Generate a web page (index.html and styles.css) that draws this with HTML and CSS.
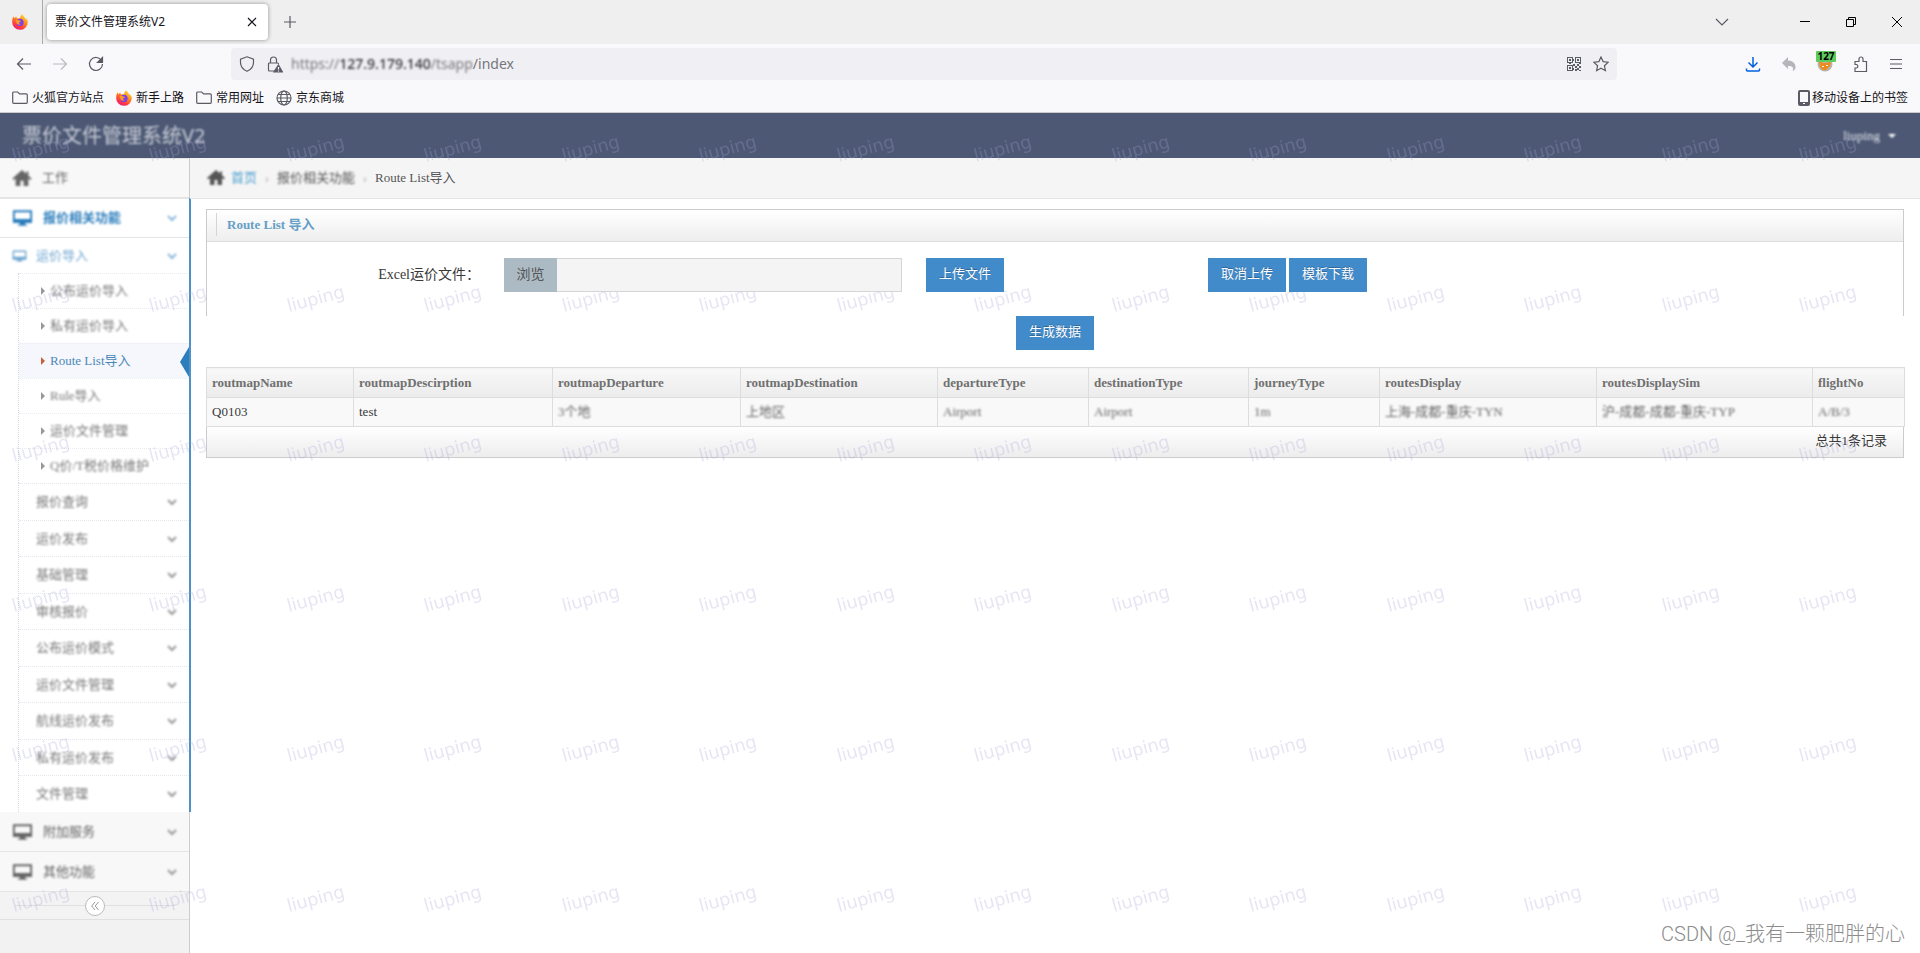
FILE: index.html
```html
<!DOCTYPE html>
<html lang="zh-CN">
<head>
<meta charset="utf-8">
<title>票价文件管理系统V2</title>
<link rel="stylesheet" href="styles.css">
</head>
<body>
<svg class="defs" aria-hidden="true">
  <defs>
    <linearGradient id="flame" x1="0.8" y1="0" x2="0.2" y2="1">
      <stop offset="0" stop-color="#ffe14a"/><stop offset="0.4" stop-color="#ff8a16"/><stop offset="0.75" stop-color="#ff3647"/><stop offset="1" stop-color="#e31587"/>
    </linearGradient>
    <symbol id="firefox" viewBox="0 0 16 16">
      <path fill="url(#flame)" d="M15.4 6.2C15 5.200 14.200 4.200 13.600 3.900c.4.8.6 1.500.7 2C13.300 3.700 11.600 2.800 10.300.3 8.800 1.200 8.200 2.900 8.100 4c-.8 0-1.600.2-2.300.6C4.700 4 4.400 3.200 4.300 2.400 3.400 2.900 2.700 3.700 2.200 4.300c-.4-.4-.4-1.700-.3-2.200C.9 3.300.2 5 .2 7.900a7.800 7.800 0 0 0 15.600.3c0-.7-.1-1.400-.4-2z"/>
      <circle cx="8" cy="8.400" r="3.600" fill="#7a3ff0"/>
      <path fill="#ff9a1f" d="M3.700 6.200c1.300-.7 2.700-.4 3.600.4 1 .2 1.600.2 1.500.6-.2.800-1.300.8-1.700 1.300-.3.700.5 1.600 1.800 1.400-1.200 1.300-3.600.8-4.400-.7-.4-1-.5-2-.8-3z"/>
    </symbol>
    <symbol id="folder" viewBox="0 0 16 16"><path d="M1.700 13.300h12.600a1 1 0 0 0 1-1V4.900a1 1 0 0 0-1-1H7.600L5.700 2H1.700a1 1 0 0 0-1 1v9.300a1 1 0 0 0 1 1z"/></symbol>
    <symbol id="chevron" viewBox="0 0 12 12"><path d="M2 4l4 4 4-4"/></symbol>
    <symbol id="monitor" viewBox="0 0 22 18"><path fill="none" stroke="currentColor" stroke-width="2" d="M2 2h18v11H2z"/><path fill="currentColor" d="M1 10h20v4H1zM8 14h6v2H8zM6 16h10v1H6z"/></symbol>
    <symbol id="home" viewBox="0 0 18 16"><path fill="currentColor" d="M9 0L0 8l1 1.400 2-1.500V15h4.500v-5h3v5H15V7.900l2 1.500L18 8l-3-2.700V1.500h-2v2z"/></symbol>
    <pattern id="marks" width="275" height="150" patternUnits="userSpaceOnUse">
      <text class="mark-text" x="14" y="49" transform="rotate(-15 14 49)">liuping</text>
      <text class="mark-text" x="151" y="49" transform="rotate(-15 151 49)">liuping</text>
    </pattern>
  </defs>
</svg>

<div class="browser">
  <div class="tabstrip">
    <div class="pinned"><svg class="i16"><use href="#firefox"/></svg></div>
    <div class="tab"><span>票价文件管理系统V2</span>
      <button class="bare" aria-label="关闭标签页"><svg class="line dark" width="10" height="10" viewBox="0 0 10 10"><path d="M1 1l8 8M9 1L1 9"/></svg></button>
    </div>
    <button class="bare newtab" aria-label="新建标签页"><svg class="line" width="12" height="12" viewBox="0 0 12 12"><path d="M6 0v12M0 6h12"/></svg></button>
    <div class="window-buttons">
      <button class="bare alltabs" aria-label="所有标签页"><svg class="line" width="14" height="14" viewBox="0 0 14 14"><path d="M1 4l6 6 6-6"/></svg></button>
      <button class="bare" aria-label="最小化"><svg class="line black" width="12" height="12" viewBox="0 0 12 12"><path d="M1 5.500h10"/></svg></button>
      <button class="bare" aria-label="还原"><svg class="line black" width="12" height="12" viewBox="0 0 12 12"><path d="M1.500 3.500h7v7h-7zM3.500 3.500v-2h7v7h-2"/></svg></button>
      <button class="bare" aria-label="关闭"><svg class="line black" width="12" height="12" viewBox="0 0 12 12"><path d="M1 1l10 10M11 1L1 11"/></svg></button>
    </div>
  </div>

  <div class="toolbar">
    <div class="nav">
      <button class="bare" aria-label="后退"><svg class="line" width="16" height="16" viewBox="0 0 16 16"><path d="M15 8H1.500M7 2.500L1.500 8 7 13.500"/></svg></button>
      <button class="bare off" aria-label="前进"><svg class="line" width="16" height="16" viewBox="0 0 16 16"><path d="M1 8h13.500M9 2.500L14.500 8 9 13.500"/></svg></button>
      <button class="bare" aria-label="刷新"><svg class="line" width="16" height="16" viewBox="0 0 16 16"><path d="M13.500 4.500A6.500 6.500 0 1 0 14.500 8"/><path fill="#5b5b66" d="M14.500 1.500v5h-5z"/></svg></button>
    </div>
    <div class="urlbar">
      <svg class="line" width="16" height="16" viewBox="0 0 16 16"><path d="M8 .8l6.500 2.300v3.400c0 4-3 7.300-6.500 8.800C4.500 13.800 1.500 10.500 1.500 6.500V3.100z"/></svg>
      <svg class="line" width="16" height="17" viewBox="0 0 16 17"><path d="M8 15H2.500a1 1 0 0 1-1-1V8a1 1 0 0 1 1-1h8a1 1 0 0 1 1 1M3.500 7V4a3 3 0 0 1 6 0v3"/><path fill="#5b5b66" d="M11.500 9l4 7H7z"/><path stroke="#fff" d="M11.500 11v2.500M11.500 14.500v1"/></svg>
      <div class="url"><span class="smudge">https://<b>127.9.179.140</b>/tsapp</span><span>/index</span></div>
      <svg width="14" height="14" viewBox="0 0 14 14" fill="#5b5b66"><path fill-rule="evenodd" d="M0 0h6v6H0zM1 1v4h4V1zM8 0h6v6H8zM9 1v4h4V1zM0 8h6v6H0zM1 9v4h4V9zM2 2h2v2H2zM10 2h2v2h-2zM2 10h2v2H2z"/><path d="M6 7h2v2H6zM8 9h2v2H8zM10 7h2v2h-2zM12 9h2v2h-2zM10 11h2v2h-2zM8 12h2v2H8zM12 13h2v1h-2zM6 2h1v2H6zM2 6h2v1H2zM6 11h1v2H6zM12 6h2v1h-2z"/></svg>
      <svg class="line" width="16" height="16" viewBox="0 0 16 16"><path d="M8 1l2.100 4.600 5.100.6-3.800 3.500 1 5L8 12.200l-4.400 2.500 1-5L.8 6.200l5.100-.6z"/></svg>
    </div>
    <div class="tools">
      <svg width="16" height="16" viewBox="0 0 16 16" fill="none" stroke="#0061e0" stroke-width="1.500"><path d="M8 1v9.500M3.500 6.500L8 11l4.500-4.500M1.500 12.500v1.500a1 1 0 0 0 1 1h11a1 1 0 0 0 1-1v-1.500"/></svg>
      <svg width="16" height="16" viewBox="0 0 16 16" fill="#b5b5ba"><path d="M7 1v3.500c5 .2 8 3 7.500 7.500-.3 1.500-1.500 2.500-3 3 1.500-3 .5-5-4.500-5V13L1 7z"/></svg>
      <div class="ext"><svg width="16" height="16" viewBox="0 0 16 16"><circle cx="8" cy="8" r="7.500" fill="#b9b2aa"/><path fill="#f08a1d" d="M2 5l4 2h4l4-2-1 5-4 4H6l-3-3z"/><path fill="#fff" d="M5 10h2v1H5zM9 9h2v1H9z"/></svg><span class="badge">127</span></div>
      <svg class="line" width="16" height="17" viewBox="0 0 16 17"><path d="M2 5.500h4V3a2 2 0 0 1 4 0v2.500h3.500v10H2V12h1.500a1.800 1.800 0 0 0 0-3.500H2z"/></svg>
      <svg class="line" width="14" height="12" viewBox="0 0 14 12"><path d="M1 1.500h12M1 6h12M1 10.500h12"/></svg>
    </div>
  </div>

  <div class="bookmarks">
    <a href="#"><svg class="i16 line"><use href="#folder"/></svg>火狐官方站点</a>
    <a href="#"><svg class="i16"><use href="#firefox"/></svg>新手上路</a>
    <a href="#"><svg class="i16 line"><use href="#folder"/></svg>常用网址</a>
    <a href="#"><svg class="i16 line" viewBox="0 0 16 16"><circle cx="8" cy="8" r="7"/><ellipse cx="8" cy="8" rx="3.300" ry="7"/><path d="M1 8h14M2 4.500h12M2 11.500h12"/></svg>京东商城</a>
    <a href="#" class="mobile"><svg width="12" height="16" viewBox="0 0 12 16"><rect x="1" y="1" width="10" height="14" rx="1" fill="none" stroke="#5b5b66" stroke-width="2"/><path fill="#5b5b66" d="M1 12h10v3H1z"/><path stroke="#fff" d="M5 13.500h2"/></svg>移动设备上的书签</a>
  </div>
</div>

<div class="app">
  <header class="topbar">
    <span class="brand smudge">票价文件管理系统V2</span>
    <button class="bare user smudge">liuping <i class="caret"></i></button>
  </header>

  <div class="body">
    <nav class="sidebar">
      <a href="#" class="top"><svg class="smudge" width="20" height="17"><use href="#home"/></svg><span class="smudge">工作</span></a>
      <div class="open">
        <a href="#" class="top current"><svg class="smudge" width="21" height="18"><use href="#monitor"/></svg><b class="smudge">报价相关功能</b><svg class="chev smudge"><use href="#chevron"/></svg></a>
        <a href="#" class="group"><svg class="smudge" width="15" height="14"><use href="#monitor"/></svg><span class="smudge">运价导入</span><svg class="chev smudge"><use href="#chevron"/></svg></a>
        <div class="leaves">
          <a href="#"><i></i><span class="smudge">公布运价导入</span></a>
          <a href="#"><i></i><span class="smudge">私有运价导入</span></a>
          <a href="#" class="active"><i></i><span>Route List导入</span></a>
          <a href="#"><i></i><span class="smudge">Rule导入</span></a>
          <a href="#"><i></i><span class="smudge">运价文件管理</span></a>
          <a href="#"><i></i><span class="smudge">Q价/T税价格维护</span></a>
        </div>
        <div class="groups">
          <a href="#"><span class="smudge">报价查询</span><svg class="chev smudge"><use href="#chevron"/></svg></a>
          <a href="#"><span class="smudge">运价发布</span><svg class="chev smudge"><use href="#chevron"/></svg></a>
          <a href="#"><span class="smudge">基础管理</span><svg class="chev smudge"><use href="#chevron"/></svg></a>
          <a href="#"><span class="smudge">审核报价</span><svg class="chev smudge"><use href="#chevron"/></svg></a>
          <a href="#"><span class="smudge">公布运价模式</span><svg class="chev smudge"><use href="#chevron"/></svg></a>
          <a href="#"><span class="smudge">运价文件管理</span><svg class="chev smudge"><use href="#chevron"/></svg></a>
          <a href="#"><span class="smudge">航线运价发布</span><svg class="chev smudge"><use href="#chevron"/></svg></a>
          <a href="#"><span class="smudge">私有运价发布</span><svg class="chev smudge"><use href="#chevron"/></svg></a>
          <a href="#"><span class="smudge">文件管理</span><svg class="chev smudge"><use href="#chevron"/></svg></a>
        </div>
      </div>
      <a href="#" class="top"><svg class="smudge" width="21" height="18"><use href="#monitor"/></svg><span class="smudge">附加服务</span><svg class="chev smudge"><use href="#chevron"/></svg></a>
      <a href="#" class="top"><svg class="smudge" width="21" height="18"><use href="#monitor"/></svg><span class="smudge">其他功能</span><svg class="chev smudge"><use href="#chevron"/></svg></a>
      <div class="collapse"><button aria-label="收起菜单"><svg width="8" height="8" viewBox="0 0 8 8"><path fill="none" stroke="#999" d="M4 0L.7 4 4 8M7.500 0L4.200 4l3.300 4"/></svg></button></div>
    </nav>

    <main>
      <div class="crumbs">
        <svg class="smudge" width="18" height="16"><use href="#home"/></svg>
        <a href="#" class="smudge">首页</a>
        <span class="sep smudge">›</span>
        <span class="smudge">报价相关功能</span>
        <span class="sep smudge">›</span>
        <span>Route List导入</span>
      </div>

      <section class="content">
        <div class="panel">
          <div class="panel-head"><h1>Route List 导入</h1></div>
          <form class="upload">
            <label for="file">Excel运价文件：</label>
            <div class="filebox"><button type="button">浏览</button><input id="file" type="text" readonly></div>
            <div class="send"><button type="button" class="btn">上传文件</button></div>
            <div class="extra"><button type="button" class="btn">取消上传</button><button type="button" class="btn">模板下载</button></div>
          </form>
        </div>
        <div class="generate"><button type="button" class="btn">生成数据</button></div>

        <table>
          <colgroup><col class="c1"><col class="c2"><col class="c3"><col class="c4"><col class="c5"><col class="c6"><col class="c7"><col class="c8"><col class="c9"><col class="c10"></colgroup>
          <thead><tr><th>routmapName</th><th>routmapDescirption</th><th>routmapDeparture</th><th>routmapDestination</th><th>departureType</th><th>destinationType</th><th>journeyType</th><th>routesDisplay</th><th>routesDisplaySim</th><th>flightNo</th></tr></thead>
          <tbody><tr><td>Q0103</td><td>test</td><td><span class="smudge">3个地</span></td><td><span class="smudge">上地区</span></td><td><span class="smudge">Airport</span></td><td><span class="smudge">Airport</span></td><td><span class="smudge">1m</span></td><td><span class="smudge">上海-成都-重庆-TYN</span></td><td><span class="smudge">沪-成都-成都-重庆-TYP</span></td><td><span class="smudge">A/B/3</span></td></tr></tbody>
        </table>
        <div class="pager">总共1条记录</div>
      </section>
      <div class="credit">CSDN @_我有一颗肥胖的心</div>
    </main>
  </div>
  <svg class="marks" aria-hidden="true"><rect width="100%" height="100%" fill="url(#marks)"/></svg>
</div>
</body>
</html>
```
FILE: styles.css
```css
* { box-sizing: border-box; }
html, body { height: 100%; }
body {
  margin: 0;
  display: flex;
  flex-direction: column;
  font: 13px/20px "Liberation Serif", "Noto Sans CJK SC", serif;
  color: #393939;
  background: #fff;
}
a { color: inherit; text-decoration: none; }
button, input { font: inherit; }
svg { flex: none; display: block; }
.defs { position: absolute; width: 0; height: 0; }
.i16 { width: 16px; height: 16px; }
.line { fill: none; stroke: #5b5b66; stroke-width: 1.2; }
.line.black { stroke: #000; stroke-width: 1; }
.line.dark { stroke: #15141a; }
.bare { border: 0; padding: 0; background: none; display: flex; align-items: center; }
.smudge { filter: blur(1px); }

/* browser frame */
.browser { flex: none; font: 12px/16px "Noto Sans", "Noto Sans CJK SC", sans-serif; color: #15141a; }
.tabstrip { display: flex; height: 44px; background: #efefef; }
.pinned { width: 43px; padding: 14px 0 0 12px; border-right: 1px solid #aaa; }
.tab {
  width: 221px; height: 36px; margin: 4px 0 0 4px; padding: 0 11px 0 8px;
  display: flex; align-items: center; justify-content: space-between;
  background: #fff; border-radius: 4px; box-shadow: 0 0 4px rgba(0, 0, 0, .4);
}
.newtab { margin-left: 16px; }
.window-buttons { margin-left: auto; display: flex; gap: 34px; padding-right: 17px; }
.alltabs { margin-right: 36px; }
.toolbar { display: flex; align-items: center; height: 40px; background: #f9f9fb; }
.nav { width: 231px; display: flex; gap: 20px; padding-left: 16px; }
.off { opacity: .4; }
.urlbar {
  flex: 1; height: 32px; padding: 0 8px; display: flex; align-items: center; gap: 12px;
  background: #f0f0f4; border-radius: 4px;
}
.url { flex: 1; display: flex; margin-left: -4px; font: 14px/20px "Noto Sans", sans-serif; color: #77767c; }
.url b { font-weight: 500; color: #333; }
.tools { width: 303px; padding-right: 17px; display: flex; justify-content: flex-end; align-items: center; gap: 20px; }
.ext { position: relative; }
.badge {
  position: absolute; left: -1px; top: -5px; width: 20px; height: 11px; border-radius: 1px;
  background: #5ecb5e; color: #000; font: bold 10px/11px "Noto Sans", sans-serif; text-align: center;
}
.bookmarks { display: flex; gap: 12px; height: 29px; padding: 0 12px; background: #f9f9fb; border-bottom: 1px solid #ccc; }
.bookmarks a { display: flex; align-items: center; gap: 4px; }
.bookmarks .mobile { margin-left: auto; gap: 2px; }

/* application */
.app { flex: 1; display: flex; flex-direction: column; position: relative; overflow: hidden; }
.topbar {
  height: 45px; padding: 0 24px 0 22px; display: flex; align-items: center; justify-content: space-between;
  background: #4c5874; color: #e6e8ee; font-family: "Noto Sans", "Noto Sans CJK SC", sans-serif;
}
.brand { font-size: 20px; line-height: 40px; opacity: .8; }
.user { color: #e6e8ee; gap: 8px; font-family: "Liberation Serif", serif; }
.caret { border: 4px solid transparent; border-top-color: #fff; border-bottom: 0; }
.body { flex: 1; display: flex; }
.sidebar { width: 190px; background: #f2f2f2; border-right: 1px solid #ccc; }
.sidebar a { display: flex; align-items: center; position: relative; }
.top { height: 40px; padding-left: 12px; gap: 10px; background: #f8f8f8; border-bottom: 1px solid #e5e5e5; color: #666; }
.top:first-child { border-top: 1px solid #e5e5e5; }
.chev { width: 12px; height: 12px; margin: 0 11px 0 auto; fill: none; stroke: #999; stroke-width: 2; }
.open { background: #fff; margin-right: -2px; border-right: 2px solid #4c92c8; }
.open .current { background: #fff; color: #2b7dbc; }
.group { height: 35px; padding-left: 12px; gap: 9px; color: #6fa6d1; }
.open .current .chev, .group .chev { stroke: #8ab8dc; }
.leaves, .groups { margin-left: 18px; border-left: 1px dotted #cfdbe6; color: #777; }
.leaves a { height: 35px; padding-left: 22px; gap: 4px; border-top: 1px dotted #e8ebf0; }
.leaves i { border: 4px solid transparent; border-left-color: #999; border-right: 0; margin-right: 1px; }
.leaves .active { background: #f5f7fc; color: #4b88b7; }
.leaves .active i { border-left-color: #c86139; }
.active::after {
  content: ""; position: absolute; right: 0; top: 3px;
  border: 15px solid transparent; border-left: 0; border-right: 9px solid #2b7dbc;
}
.groups a { height: 36px; padding-left: 17px; border-top: 1px dotted #e4e8ee; }
.groups a:nth-child(odd) { height: 37px; }
.collapse {
  height: 28px; display: grid; place-items: center; border-bottom: 1px solid #e0e0e0;
  background: linear-gradient(#e0e0e0, #e0e0e0) center / 160px 1px no-repeat #f3f3f3;
}
.collapse button {
  width: 20px; height: 20px; padding: 0; display: grid; place-items: center;
  border: 1px solid #bbb; border-radius: 50%; background: #fff;
}
main { flex: 1; min-width: 0; display: flex; flex-direction: column; }
.crumbs {
  height: 41px; padding-left: 17px; display: flex; align-items: center; gap: 6px;
  background: #f5f5f5; border-bottom: 1px solid #e5e5e5; color: #555;
}
.crumbs a { color: #4c9fd0; }
.sep { width: 8px; text-align: center; color: #aaa; }
.content { padding: 10px 16px 0; }
.panel { border: 1px solid #ccc; border-bottom: 0; height: 107px; }
.panel-head { height: 32px; padding: 3px 9px; background: linear-gradient(#fff, #eee); border-bottom: 1px solid #ddd; }
h1 { margin: 0; padding-left: 10px; border-left: 1px solid #d5d5d5; font-size: 13px; line-height: 23px; color: #669fc7; }
.upload { display: grid; grid-template-columns: 297fr 398fr 306fr 695fr; padding-top: 16px; font-size: 14px; }
.upload label { text-align: right; padding-right: 24px; line-height: 34px; }
.filebox { display: flex; height: 34px; position: relative; z-index: 2; }
.filebox button { width: 53px; padding: 0; border: 0; background: #abbac3; color: #555; }
.filebox input { flex: 1; min-width: 0; border: 1px solid #d5d5d5; border-left: 0; background: #f4f4f4; }
.send { padding-left: 24px; }
.extra { display: flex; gap: 3px; }
.btn {
  width: 78px; height: 34px; padding: 0 0 2px; border: 0; background: #428bca; color: #fff;
  font-size: 13px; text-shadow: 0 -1px 0 rgba(0, 0, 0, .25); position: relative; z-index: 2;
}
.generate { display: flex; justify-content: center; height: 51px; }
table { width: 100%; table-layout: fixed; border-collapse: collapse; }
.c1 { width: 147px; } .c2 { width: 199px; } .c3 { width: 188px; } .c4 { width: 197px; } .c5 { width: 151px; }
.c6 { width: 160px; } .c7 { width: 131px; } .c8 { width: 217px; } .c9 { width: 216px; } .c10 { width: 92px; }
th, td { border: 1px solid #ddd; padding: 0 5px; text-align: left; white-space: nowrap; line-height: 20px; }
th { height: 30px; color: #707070; background: linear-gradient(#f8f8f8, #ececec); }
td { height: 29px; background: #f9f9f9; }
td .smudge { color: #666; }
.pager {
  height: 31px; padding: 0 16px; line-height: 28px; text-align: right; font-size: 13px;
  border: 1px solid #ccc; border-top: 0; background: linear-gradient(#fff, #ededed);
}
.credit {
  margin-top: auto; padding: 0 15px 4px; text-align: right; color: #8c8c8c;
  font: 300 20px/30px Roboto, "Noto Sans CJK SC", sans-serif;
}
.marks { position: absolute; inset: 0; width: 100%; height: 100%; z-index: 1; pointer-events: none; }
.mark-text { font: 18px "Noto Sans", sans-serif; fill: rgba(165, 160, 215, .28); }
```
